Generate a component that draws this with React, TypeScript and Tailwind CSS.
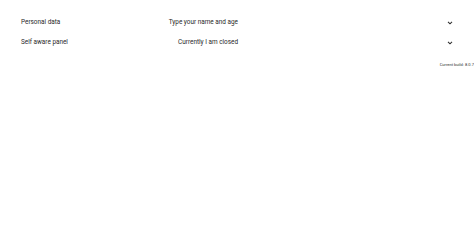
const panels = [
  { title: "Personal data", description: "Type your name and age" },
  { title: "Self aware panel", description: "Currently I am closed" },
];

function Chevron() {
  return (
    <svg width="6" height="4" viewBox="0 0 6 4" className="shrink-0">
      <path d="M1 0.8 L3 2.8 L5 0.8" fill="none" stroke="#333" strokeWidth="1.1" />
    </svg>
  );
}

export default function App() {
  return (
    <div
      className="min-h-screen bg-white text-[#2a2a2a]"
      style={{ fontFamily: "Roboto, 'Liberation Sans', sans-serif" }}
    >
      <div className="flex flex-col pt-[13px]">
        {panels.map((p) => (
          <div key={p.title} className="flex h-[20px] items-center px-[21px] text-[6.4px]">
            <div className="w-[108px]">{p.title}</div>
            <div className="w-[109px] text-right">{p.description}</div>
            <div className="flex-1" />
            <Chevron />
          </div>
        ))}
      </div>
      <div className="mt-[9px] flex justify-end text-[4.1px] text-[#333]">
        Current build: 8.0.7
      </div>
    </div>
  );
}
